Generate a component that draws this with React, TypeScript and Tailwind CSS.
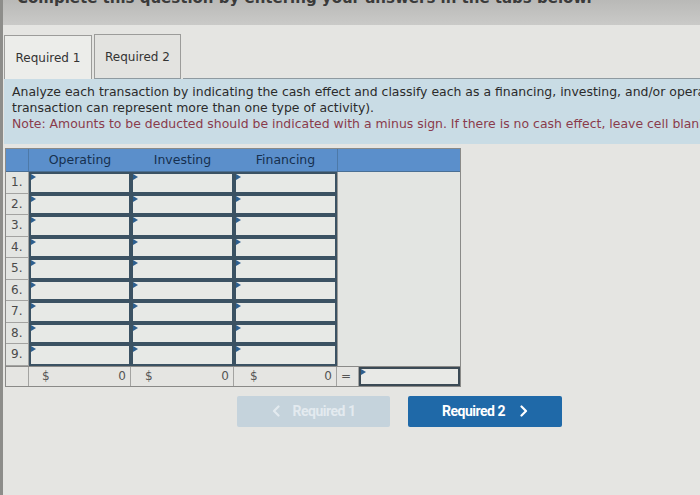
import React from 'react';

const rows = [1, 2, 3, 4, 5, 6, 7, 8, 9];

const Flag = () => (
  <span className="absolute left-0 top-0 w-0 h-0 border-y-[3px] border-y-transparent border-l-[5px] border-l-[#2d5f8f]" />
);

const InputCell = () => (
  <div className="relative h-full border-2 border-[#3b5263] bg-[#e7e9e6]">
    <Flag />
  </div>
);

const Chevron = ({ left }: { left?: boolean }) => (
  <svg width="9" height="12" viewBox="0 0 9 12" fill="none" stroke="currentColor" strokeWidth="2.2" strokeLinecap="round" strokeLinejoin="round">
    {left ? <path d="M6.5 1.5 2 6l4.5 4.5" /> : <path d="M2.5 1.5 7 6l-4.5 4.5" />}
  </svg>
);

const App = () => {
  return (
    <div className="w-[700px] h-[495px] overflow-hidden bg-[#e5e5e2] border-l-[3px] border-[#8d8d8a] flex flex-col font-['DejaVu_Sans',sans-serif]">
      {/* cut off question header */}
      <div className="h-[25px] shrink-0 overflow-hidden bg-gradient-to-b from-[#b9b9b7] to-[#cacac8]">
        <p className="-mt-[13px] ml-[14px] text-[15px] font-bold text-[#3a3a3a] whitespace-nowrap">
          Complete this question by entering your answers in the tabs below.
        </p>
      </div>

      {/* tabs */}
      <div className="flex items-end gap-[2px] pt-[9px] pl-[1px] shrink-0">
        <div className="w-[88px] h-[44px] border border-b-0 border-[#9c9c9a] bg-[#ecedea] flex items-center justify-center text-[12px] text-[#333]">
          Required 1
        </div>
        <div className="w-[87px] h-[45px] border border-[#9c9c9a] border-b-[#8f9aa0] bg-[#e3e3e0] flex items-center justify-center text-[12px] text-[#333]">
          Required 2
        </div>
        <div className="flex-1 border-b border-[#8f9aa0]" />
      </div>

      {/* instructions */}
      <div className="ml-[1px] h-[65px] shrink-0 bg-[#c9dce5] pl-[8px] pt-[5px] text-[12.45px] leading-[16px] text-[#2b2b2b] whitespace-nowrap overflow-hidden">
        <p>Analyze each transaction by indicating the cash effect and classify each as a financing, investing, and/or operating activity. A</p>
        <p>transaction can represent more than one type of activity).</p>
        <p className="text-[#8a3b4b]">Note: Amounts to be deducted should be indicated with a minus sign. If there is no cash effect, leave cell blank.</p>
      </div>

      {/* table */}
      <div className="ml-[2px] mt-[4px] w-[456px] border border-[#8a8a88] shrink-0">
        <div className="grid grid-cols-[23px_102px_103px_103px_123px] h-[23px] bg-[#5b8fcb] border-b border-[#4a6f94] text-[12.5px] text-[#16304f]">
          <div className="border-r border-[#4d79a8]" />
          <div className="flex items-center justify-center">Operating</div>
          <div className="flex items-center justify-center">Investing</div>
          <div className="flex items-center justify-center">Financing</div>
          <div className="border-l border-[#4d79a8]" />
        </div>
        <div className="grid grid-cols-[23px_102px_103px_103px_123px] bg-[#e3e5e2]">
          <div className="flex flex-col">
            {rows.map((n) => (
              <div key={n} className="h-[21.5px] border-r border-b border-[#a3a3a1] pl-[5px] flex items-center text-[12px] text-[#4a4a4a]">
                {n}.
              </div>
            ))}
          </div>
          {[0, 1, 2].map((c) => (
            <div key={c} className="flex flex-col">
              {rows.map((n) => (
                <div key={n} className="h-[21.5px]">
                  <InputCell />
                </div>
              ))}
            </div>
          ))}
          <div className="border-l border-[#9a9a98]" />
        </div>
        <div className="grid grid-cols-[23px_102px_103px_103px_22px_101px] h-[20px] border-t border-[#8a8a88] text-[12px] text-[#555]">
          <div className="border-r border-[#a3a3a1]" />
          <div className="border-r border-[#a3a3a1] flex items-center justify-between pl-[13px] pr-[4px]">
            <span>$</span>
            <span>0</span>
          </div>
          <div className="border-r border-[#a3a3a1] flex items-center justify-between pl-[14px] pr-[4px]">
            <span>$</span>
            <span>0</span>
          </div>
          <div className="border-r border-[#a3a3a1] flex items-center justify-between pl-[16px] pr-[4px]">
            <span>$</span>
            <span>0</span>
          </div>
          <div className="border-r border-[#a3a3a1] flex items-center pl-[4px]">=</div>
          <div className="relative border-2 border-[#3b4a55] bg-[#e8e9e6]">
            <Flag />
          </div>
        </div>
      </div>

      {/* navigation */}
      <div className="flex gap-[18px] pl-[234px] mt-[9px] shrink-0 font-['Roboto',sans-serif]">
        <button className="w-[153px] h-[31px] bg-[#c5d3dc] rounded-[2px] text-[#e3eaef] text-[14px] font-bold tracking-[-0.5px] flex items-center justify-center gap-[12px]">
          <Chevron left />
          <span>Required 1</span>
        </button>
        <button className="w-[154px] h-[31px] bg-[#1f69a8] rounded-[2px] text-white text-[14px] font-bold tracking-[-0.5px] flex items-center justify-center gap-[14px]">
          <span>Required 2</span>
          <Chevron />
        </button>
      </div>
    </div>
  );
};

export default App;
